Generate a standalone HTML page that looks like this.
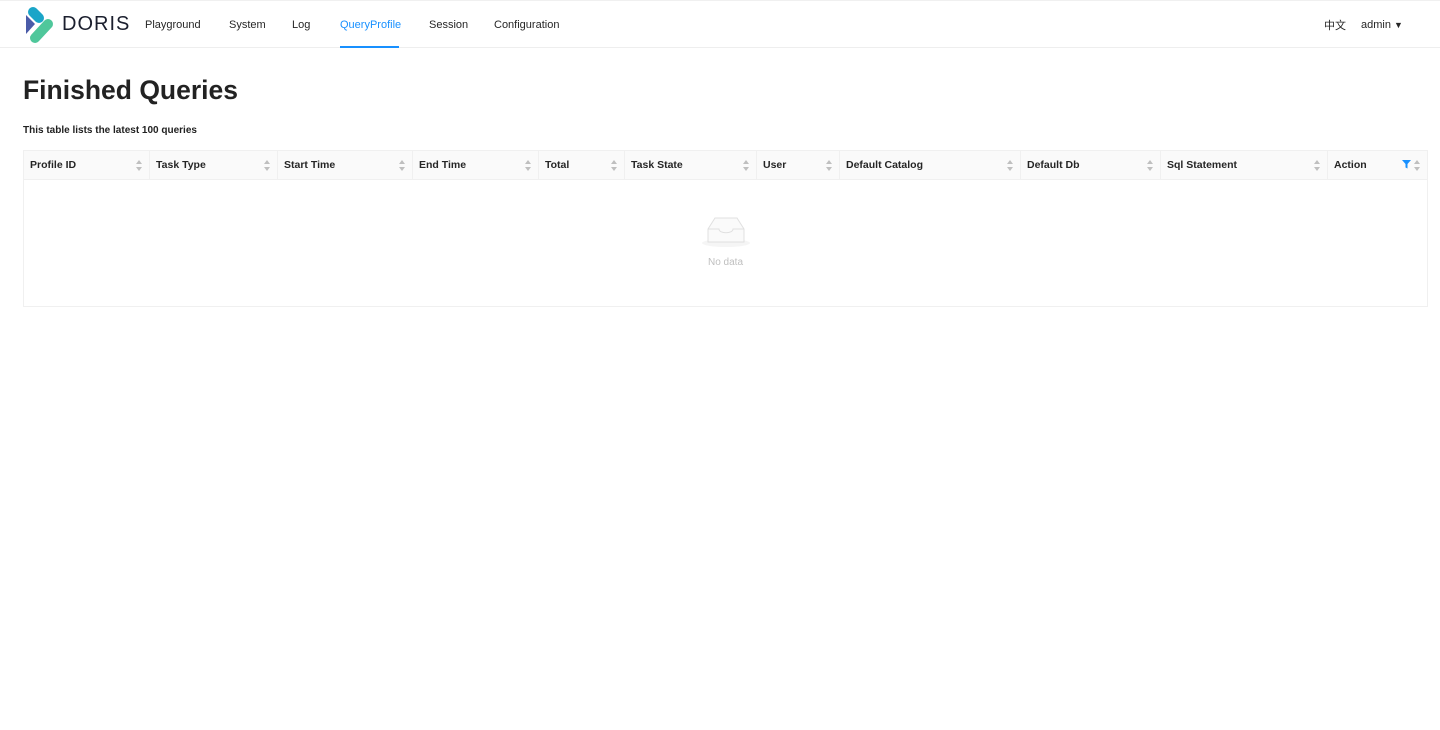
<!DOCTYPE html>
<html><head><meta charset="utf-8"><style>
*{box-sizing:border-box;margin:0;padding:0}
body{width:1440px;height:730px;background:#fff;font-family:"Liberation Sans","Noto Sans CJK SC",sans-serif;color:#262626;overflow:hidden;position:relative}
.hdr{position:absolute;left:0;top:0;width:1440px;height:48px;border-bottom:1px solid #eee;border-top:1px solid #f0f0f0}
.logo{position:absolute;left:0;top:0}
.brand{position:absolute;left:62px;top:12px;font-size:20px;letter-spacing:1px;color:#1b1f2e}
.nav a{position:absolute;top:18px;font-size:11px;color:#262626;text-decoration:none}
.nav a.act{color:#1890ff}
.ul{position:absolute;left:340px;top:45px;width:59px;height:2px;background:#1890ff}
h1{position:absolute;left:23px;top:75px;font-size:26.5px;font-weight:bold;color:#222}
.sub{position:absolute;left:23px;top:125px;font-size:10px;font-weight:bold;color:#222}
.tbl{position:absolute;left:23px;top:150px;width:1405px;height:157px;border:1px solid #f0f0f0}
.th{position:absolute;top:0;height:29px;background:#fafafa;border-bottom:1px solid #f0f0f0;font-size:10.5px;font-weight:bold;line-height:29px;padding-left:6px;border-right:1px solid #f0f0f0}
.s{position:absolute;right:7px;top:9px;width:6px;height:11px}
.s:before,.s:after{content:"";position:absolute;left:0;border-left:3px solid transparent;border-right:3px solid transparent}
.s:before{top:0;border-bottom:4px solid #bfbfbf}
.s:after{bottom:0;border-top:4px solid #bfbfbf}
.nd{position:absolute;left:0;width:100%;top:106px;text-align:center;font-size:10px;color:#bfbfbf}
</style></head><body>
<div class="hdr">
<svg class="logo" width="60" height="48" viewBox="0 0 60 48">
<path d="M26 14 L35 23 L26 33 Z" fill="#4a5ba8"/>
<line x1="33" y1="11" x2="39" y2="17" stroke="#1aa5c8" stroke-width="10" stroke-linecap="round"/>
<line x1="48" y1="23" x2="35" y2="37" stroke="#4fc79b" stroke-width="10" stroke-linecap="round"/>
</svg>
<div class="brand">DORIS</div>
<div class="nav">
<a style="left:145px">Playground</a>
<a style="left:229px">System</a>
<a style="left:292px">Log</a>
<a class="act" style="left:340px">QueryProfile</a>
<a style="left:429px">Session</a>
<a style="left:494px">Configuration</a>
<a style="left:1324px;top:16px">中文</a>
<a style="left:1361px">admin <span style="font-size:9px">▼</span></a>
</div>
<div class="ul"></div>
</div>
<h1>Finished Queries</h1>
<div class="sub">This table lists the latest 100 queries</div>
<div class="tbl">
<div class="th" style="left:0;width:126px">Profile ID<i class="s"></i></div>
<div class="th" style="left:126px;width:128px">Task Type<i class="s"></i></div>
<div class="th" style="left:254px;width:135px">Start Time<i class="s"></i></div>
<div class="th" style="left:389px;width:126px">End Time<i class="s"></i></div>
<div class="th" style="left:515px;width:86px">Total<i class="s"></i></div>
<div class="th" style="left:601px;width:132px">Task State<i class="s"></i></div>
<div class="th" style="left:733px;width:83px">User<i class="s"></i></div>
<div class="th" style="left:816px;width:181px">Default Catalog<i class="s"></i></div>
<div class="th" style="left:997px;width:140px">Default Db<i class="s"></i></div>
<div class="th" style="left:1137px;width:167px">Sql Statement<i class="s"></i></div>
<div class="th" style="left:1304px;width:99px;border-right:0">Action<i class="s"></i>
<svg style="position:absolute;right:16px;top:9px" width="9" height="9" viewBox="0 0 9 9"><path d="M0 0H9L5.5 4V8.5L3.5 7.5V4Z" fill="#1890ff"/></svg></div>
<svg style="position:absolute;left:678px;top:64px" width="50" height="34" viewBox="0 0 50 34">
<ellipse cx="24" cy="28" rx="24" ry="4" fill="#f5f5f5"/>
<path d="M6 14 L13 3 H35 L42 14 V27 H6 Z" fill="#fafafa" stroke="#e0e0e0"/>
<path d="M6 14 H17 C17 19 31 19 31 14 H42" fill="none" stroke="#e0e0e0"/>
</svg>
<div class="nd">No data</div>
</div>
</body></html>
